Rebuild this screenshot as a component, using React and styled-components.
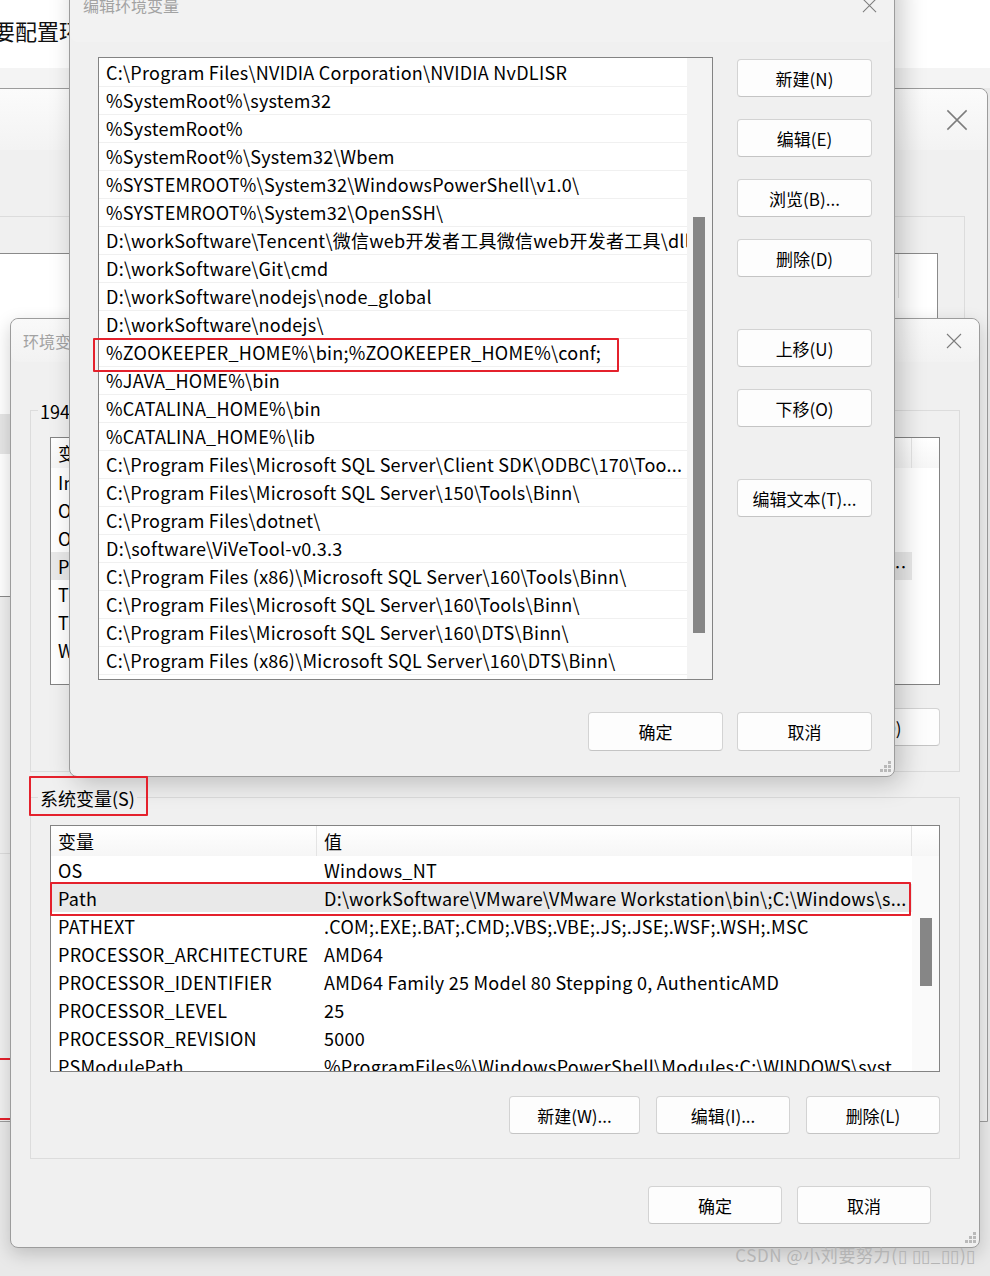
import React from "react";
import styled, { createGlobalStyle } from "styled-components";

const UI_FONT = `"Noto Sans CJK SC", "Noto Sans", sans-serif`;

const GlobalStyle = createGlobalStyle`
  html, body { margin: 0; padding: 0; }
  body { background: #ececec; font-family: ${UI_FONT}; color: #000; }
`;

const editPaths = [
  "C:\\Program Files\\NVIDIA Corporation\\NVIDIA NvDLISR",
  "%SystemRoot%\\system32",
  "%SystemRoot%",
  "%SystemRoot%\\System32\\Wbem",
  "%SYSTEMROOT%\\System32\\WindowsPowerShell\\v1.0\\",
  "%SYSTEMROOT%\\System32\\OpenSSH\\",
  "D:\\workSoftware\\Tencent\\微信web开发者工具微信web开发者工具\\dll",
  "D:\\workSoftware\\Git\\cmd",
  "D:\\workSoftware\\nodejs\\node_global",
  "D:\\workSoftware\\nodejs\\",
  "%ZOOKEEPER_HOME%\\bin;%ZOOKEEPER_HOME%\\conf;",
  "%JAVA_HOME%\\bin",
  "%CATALINA_HOME%\\bin",
  "%CATALINA_HOME%\\lib",
  "C:\\Program Files\\Microsoft SQL Server\\Client SDK\\ODBC\\170\\Too...",
  "C:\\Program Files\\Microsoft SQL Server\\150\\Tools\\Binn\\",
  "C:\\Program Files\\dotnet\\",
  "D:\\software\\ViVeTool-v0.3.3",
  "C:\\Program Files (x86)\\Microsoft SQL Server\\160\\Tools\\Binn\\",
  "C:\\Program Files\\Microsoft SQL Server\\160\\Tools\\Binn\\",
  "C:\\Program Files\\Microsoft SQL Server\\160\\DTS\\Binn\\",
  "C:\\Program Files (x86)\\Microsoft SQL Server\\160\\DTS\\Binn\\",
];

const userVars = [
  { name: "IntelliJ IDEA", value: "D:\\workSoftware\\IntelliJ IDEA\\bin;" },
  { name: "OneDrive", value: "C:\\Users\\19452\\OneDrive" },
  { name: "OneDriveConsumer", value: "C:\\Users\\19452\\OneDrive" },
  { name: "Path", value: "C:\\Users\\19452\\AppData\\Local\\Microsoft\\WindowsApps;D:\\workSoftware\\nodejs\\node_global;D:\\workSoftware\\Microsoft VS Code\\bin", selected: true },
  { name: "TEMP", value: "C:\\Users\\19452\\AppData\\Local\\Temp" },
  { name: "TMP", value: "C:\\Users\\19452\\AppData\\Local\\Temp" },
  { name: "WebStorm", value: "D:\\workSoftware\\WebStorm\\bin;" },
];

const sysVars = [
  { name: "OS", value: "Windows_NT" },
  { name: "Path", value: "D:\\workSoftware\\VMware\\VMware Workstation\\bin\\;C:\\Windows\\s...", selected: true },
  { name: "PATHEXT", value: ".COM;.EXE;.BAT;.CMD;.VBS;.VBE;.JS;.JSE;.WSF;.WSH;.MSC" },
  { name: "PROCESSOR_ARCHITECTURE", value: "AMD64" },
  { name: "PROCESSOR_IDENTIFIER", value: "AMD64 Family 25 Model 80 Stepping 0, AuthenticAMD" },
  { name: "PROCESSOR_LEVEL", value: "25" },
  { name: "PROCESSOR_REVISION", value: "5000" },
  { name: "PSModulePath", value: "%ProgramFiles%\\WindowsPowerShell\\Modules;C:\\WINDOWS\\syst..." },
];

const CloseIcon = ({ size = 16, color = "#7c7c7c" }) => (
  <svg width={size} height={size} viewBox="0 0 16 16">
    <path d="M1 1 L15 15 M15 1 L1 15" stroke={color} strokeWidth="1.1" fill="none" />
  </svg>
);

const Grip = () => (
  <svg width="12" height="12" viewBox="0 0 12 12">
    {[[9, 0], [9, 4], [5, 4], [9, 8], [5, 8], [1, 8]].map(([x, y]) => (
      <rect key={`${x}-${y}`} x={x} y={y} width="3" height="3" fill="#b9b9b9" />
    ))}
  </svg>
);

const Desktop = styled.div`
  position: relative;
  width: 990px;
  height: 1276px;
  overflow: hidden;
  background: #e9e9e9;
`;

const PageTop = styled.div`
  height: 68px;
  box-sizing: border-box;
  padding-top: 14px;
  background: #fff;
`;

const PageHeading = styled.h1`
  margin: 0 0 0 -7px;
  font: 400 22px/32px ${UI_FONT};
  color: #111;
  white-space: nowrap;
`;

const PageBand = styled.div`
  height: 20px;
  background: #f4f4f4;
`;

const Window = styled.section`
  position: absolute;
  left: ${(p) => p.$x}px;
  top: ${(p) => p.$y}px;
  width: ${(p) => p.$w}px;
  height: ${(p) => p.$h}px;
  z-index: ${(p) => p.$z};
  box-sizing: border-box;
  display: flex;
  flex-direction: column;
  background: #f0f0f0;
  border: 1px solid #9c9c9c;
  border-radius: ${(p) => p.$radius || "8px"};
  box-shadow: ${(p) => p.$shadow || "none"};
`;

const TitleBar = styled.header`
  flex-shrink: 0;
  height: ${(p) => p.$h}px;
  display: flex;
  align-items: center;
  justify-content: space-between;
  padding: 0 ${(p) => p.$pr}px 0 ${(p) => p.$pl}px;
  background: ${(p) => p.$bg || "#f2f2f2"};
  border-radius: inherit;
`;

const Title = styled.span`
  font-size: 16px;
  color: #a2a2a2;
  margin-top: ${(p) => p.$mt || 0}px;
`;

const CloseBox = styled.span`
  display: flex;
  margin-top: ${(p) => p.$mt || 0}px;
`;

const GripSpot = styled.span`
  position: absolute;
  right: 3px;
  bottom: 3px;
  display: flex;
`;

const Button = styled.button`
  box-sizing: border-box;
  flex-shrink: 0;
  width: ${(p) => p.$w || 135}px;
  height: ${(p) => p.$h || 38}px;
  margin-top: ${(p) => p.$mt || 0}px;
  padding: 0;
  background: #fdfdfd;
  border: 1px solid #d3d3d3;
  border-bottom-color: #c4c4c4;
  border-radius: 4px;
  font: 17px ${UI_FONT};
  color: #000;
`;

/* ---------- back window ---------- */

const BackBody = styled.div`
  flex: 1;
  padding-top: 66px;
  display: flex;
  flex-direction: column;
`;

const BackGroup = styled.div`
  margin-right: 22px;
  height: 600px;
  border: 1px solid #dcdcdc;
  border-left: none;
  padding: 36px 26px 0 0;
`;

const BackList = styled.div`
  height: 344px;
  box-sizing: border-box;
  background: #fff;
  border: 1px solid #8a8a8a;
  border-left: none;
  display: flex;
  flex-direction: column;
`;

const BackHeader = styled.div`
  height: 44px;
  display: flex;
`;

const BackHeadCell = styled.div`
  flex: 1;
  border-right: 1px solid #e3e3e3;
`;

const BackHeadFill = styled.div`
  width: 38px;
`;

const BackSelected = styled.div`
  margin-top: 116px;
  height: 40px;
  background: #e6e6e6;
`;

/* ---------- edit window ---------- */

const EditBody = styled.div`
  flex: 1;
  padding: 15px 22px 0 28px;
  display: flex;
  flex-direction: column;
`;

const EditTop = styled.div`
  display: flex;
  gap: 24px;
`;

const PathList = styled.div`
  box-sizing: border-box;
  width: 615px;
  height: 623px;
  border: 1px solid #838383;
  background: #fff;
  display: flex;
  overflow: hidden;
`;

const PathRows = styled.ul`
  flex: 1;
  min-width: 0;
  margin: 0;
  padding: 1px 0 0;
  list-style: none;
`;

const PathRow = styled.li`
  height: 28px;
  box-sizing: border-box;
  border-bottom: 1px solid #f0f0f0;
  padding-left: 7px;
  font-size: 18px;
  line-height: 27px;
  letter-spacing: 0.25px;
  white-space: nowrap;
  overflow: hidden;
`;

const ScrollTrack = styled.div`
  flex-shrink: 0;
  width: ${(p) => p.$w}px;
  box-sizing: border-box;
  padding-left: ${(p) => p.$pl || 0}px;
  background: ${(p) => p.$bg || "#fff"};
`;

const ScrollThumb = styled.div`
  width: 12px;
  height: ${(p) => p.$h}px;
  margin-top: ${(p) => p.$top}px;
  background: #868686;
`;

const SideButtons = styled.div`
  display: flex;
  flex-direction: column;
  padding-top: 2px;
`;

const Footer = styled.div`
  display: flex;
  justify-content: flex-end;
  gap: ${(p) => p.$gap || 14}px;
  margin-top: ${(p) => p.$mt}px;
  padding-right: ${(p) => p.$pr || 0}px;
`;

/* ---------- env window ---------- */

const EnvBody = styled.div`
  flex: 1;
  padding: 0 19px;
  display: flex;
  flex-direction: column;
`;

const Group = styled.div`
  margin-top: ${(p) => p.$mt}px;
  border: 1px solid #dcdcdc;
  padding: 0 19px ${(p) => p.$pb}px;
  display: flex;
  flex-direction: column;
`;

const GroupLabel = styled.div`
  align-self: flex-start;
  height: 24px;
  margin: -12px 0 0 -12px;
  padding: 0 2px;
  background: #f0f0f0;
  font-size: 18px;
  line-height: 24px;
  white-space: nowrap;
`;

const VarList = styled.div`
  box-sizing: border-box;
  height: ${(p) => p.$h}px;
  margin-top: ${(p) => p.$mt}px;
  border: 1px solid #838383;
  background: #fff;
  display: flex;
  flex-direction: column;
  overflow: hidden;
`;

const VarHeader = styled.div`
  flex-shrink: 0;
  height: 30px;
  display: flex;
  background: linear-gradient(#ffffff, #f6f6f6);
`;

const HeadCell = styled.div`
  flex-shrink: 0;
  width: ${(p) => p.$w}px;
  box-sizing: border-box;
  padding-left: 7px;
  border-right: 1px solid #e4e4e4;
  font-size: 18px;
  line-height: 30px;
`;

const VarBody = styled.div`
  flex: 1;
  min-height: 0;
  display: flex;
`;

const VarRows = styled.div`
  flex: 1;
  min-width: 0;
  display: flex;
  flex-direction: column;
`;

const VarRow = styled.div`
  flex-shrink: 0;
  height: 28px;
  display: flex;
  background: ${(p) => (p.$selected ? "#e9e9e9" : "transparent")};
`;

const VarCell = styled.div`
  box-sizing: border-box;
  flex: ${(p) => (p.$w ? `0 0 ${p.$w}px` : "1")};
  min-width: 0;
  padding-left: 7px;
  font-size: 18px;
  line-height: 28px;
  letter-spacing: 0.25px;
  white-space: nowrap;
  overflow: hidden;
  text-overflow: ellipsis;
`;

const ButtonRow = styled.div`
  display: flex;
  justify-content: flex-end;
  gap: 16px;
  margin-top: ${(p) => p.$mt}px;
`;

/* ---------- overlays ---------- */

const Annotation = styled.div`
  position: absolute;
  left: ${(p) => p.$x}px;
  top: ${(p) => p.$y}px;
  width: ${(p) => p.$w}px;
  height: ${(p) => p.$h}px;
  z-index: ${(p) => p.$z || 6};
  box-sizing: border-box;
  border: 2px solid #e4212c;
  border-radius: 1px;
`;

const Watermark = styled.div`
  position: absolute;
  right: 14px;
  top: 1242px;
  z-index: 7;
  font: 17px/26px ${UI_FONT};
  letter-spacing: 0.6px;
  color: #b4b4b4;
  white-space: nowrap;
`;

const VariableList = ({ vars, height, mt, thumb }) => (
  <VarList $h={height} $mt={mt}>
    <VarHeader>
      <HeadCell $w={266}>变量</HeadCell>
      <HeadCell $w={595}>值</HeadCell>
    </VarHeader>
    <VarBody>
      <VarRows>
        {vars.map((v) => (
          <VarRow key={v.name} $selected={v.selected}>
            <VarCell $w={266}>{v.name}</VarCell>
            <VarCell>{v.value}</VarCell>
          </VarRow>
        ))}
      </VarRows>
      <ScrollTrack $w={27} $pl={8} $bg={thumb ? "#fafafa" : "#fff"}>
        {thumb && <ScrollThumb $top={thumb.top} $h={thumb.h} />}
      </ScrollTrack>
    </VarBody>
  </VarList>
);

export default function App() {
  return (
    <Desktop>
      <GlobalStyle />
      <PageTop>
        <PageHeading>要配置环境变量</PageHeading>
      </PageTop>
      <PageBand />

      <Window $x={-20} $y={88} $w={1008} $h={1034} $z={1} $radius="0 8px 0 0">
        <TitleBar $h={61} $pl={20} $pr={19} $bg="linear-gradient(#fbfbfb, #f3f3f3)">
          <span />
          <CloseIcon size={22} />
        </TitleBar>
        <BackBody>
          <BackGroup>
            <BackList>
              <BackHeader>
                <BackHeadCell />
                <BackHeadFill />
              </BackHeader>
              <BackSelected />
            </BackList>
          </BackGroup>
        </BackBody>
      </Window>
      <Annotation $x={-40} $y={1058} $w={60} $h={62} $z={2} />

      <Window
        $x={10}
        $y={318}
        $w={970}
        $h={930}
        $z={3}
        $shadow="0 6px 18px rgba(0,0,0,0.18)"
      >
        <TitleBar $h={43} $pl={12} $pr={17} $bg="linear-gradient(#f9f9f9, #f2f2f2)">
          <Title>环境变量</Title>
          <CloseBox>
            <CloseIcon size={16} />
          </CloseBox>
        </TitleBar>
        <EnvBody>
          <Group $mt={48} $pb={25}>
            <GroupLabel>19452 的用户变量(U)</GroupLabel>
            <VariableList vars={userVars} height={248} mt={14} />
            <ButtonRow $mt={23}>
              <Button $w={131}>新建(N)...</Button>
              <Button $w={134}>编辑(E)...</Button>
              <Button $w={134}>删除(D)</Button>
            </ButtonRow>
          </Group>
          <Group $mt={25} $pb={24}>
            <GroupLabel>系统变量(S)</GroupLabel>
            <VariableList vars={sysVars} height={247} mt={15} thumb={{ top: 62, h: 68 }} />
            <ButtonRow $mt={24}>
              <Button $w={131}>新建(W)...</Button>
              <Button $w={134}>编辑(I)...</Button>
              <Button $w={134}>删除(L)</Button>
            </ButtonRow>
          </Group>
          <Footer $mt={27} $pr={29} $gap={15}>
            <Button $w={134}>确定</Button>
            <Button $w={134}>取消</Button>
          </Footer>
        </EnvBody>
        <GripSpot>
          <Grip />
        </GripSpot>
      </Window>

      <Window
        $x={69}
        $y={-30}
        $w={826}
        $h={807}
        $z={5}
        $shadow="6px 6px 26px rgba(0,0,0,0.22)"
      >
        <TitleBar $h={71} $pl={13} $pr={17}>
          <Title $mt={-3}>编辑环境变量</Title>
          <CloseBox $mt={-3}>
            <CloseIcon size={15} />
          </CloseBox>
        </TitleBar>
        <EditBody>
          <EditTop>
            <PathList>
              <PathRows>
                {editPaths.map((p) => (
                  <PathRow key={p}>{p}</PathRow>
                ))}
              </PathRows>
              <ScrollTrack $w={25} $pl={6} $bg="#f3f3f3">
                <ScrollThumb $top={159} $h={416} />
              </ScrollTrack>
            </PathList>
            <SideButtons>
              <Button>新建(N)</Button>
              <Button $mt={22}>编辑(E)</Button>
              <Button $mt={22}>浏览(B)...</Button>
              <Button $mt={22}>删除(D)</Button>
              <Button $mt={52}>上移(U)</Button>
              <Button $mt={22}>下移(O)</Button>
              <Button $mt={52}>编辑文本(T)...</Button>
            </SideButtons>
          </EditTop>
          <Footer $mt={32}>
            <Button $h={39}>确定</Button>
            <Button $h={39}>取消</Button>
          </Footer>
        </EditBody>
        <GripSpot>
          <Grip />
        </GripSpot>
      </Window>

      <Annotation $x={93} $y={338} $w={526} $h={34} />
      <Annotation $x={29} $y={776} $w={119} $h={40} />
      <Annotation $x={50} $y={882} $w={861} $h={34} />

      <Watermark>CSDN @小刘要努力(▯ ▯▯_▯▯)▯</Watermark>
    </Desktop>
  );
}
